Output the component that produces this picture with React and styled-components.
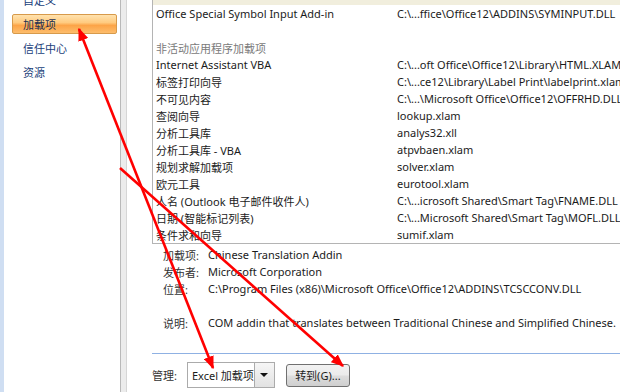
import React from "react";
import styled, { createGlobalStyle } from "styled-components";

const GlobalStyle = createGlobalStyle`
  html, body { margin: 0; padding: 0; background: #ffffff; }
  body { font-family: "Noto Sans", "Noto Sans CJK SC", sans-serif; font-size: 11px; }
`;

const Screen = styled.div`
  position: relative;
  width: 620px;
  height: 392px;
  overflow: hidden;
  display: flex;
  background: #ffffff;
  color: #1b1b1b;
`;

const Strip = styled.div`
  flex: 0 0 4px;
  background: #cfdef2;
`;

const Nav = styled.div`
  flex: 0 0 116px;
  margin-top: -12px;
  display: flex;
  flex-direction: column;
`;

const NavItem = styled.div`
  height: 20px;
  margin: 2px 3px 2px 8px;
  padding-left: 10px;
  display: flex;
  align-items: center;
  box-sizing: border-box;
  color: ${({ active }) => (active ? "#1c2f52" : "#20407a")};
  border: 1px solid ${({ active }) => (active ? "#d79a4b" : "transparent")};
  border-radius: 2px;
  background: ${({ active }) =>
    active
      ? "linear-gradient(#ffe2ae 0%, #ffcb80 42%, #fca447 58%, #fdbd6c 100%)"
      : "transparent"};
`;

const Divider = styled.div`
  flex: 0 0 5px;
  background: #ececec;
  border-left: 1px solid #b9b9b9;
  border-right: 1px solid #d6d6d6;
`;

const Content = styled.div`
  flex: 1 1 auto;
  min-width: 0;
  padding-left: 25px;
  display: flex;
  flex-direction: column;
`;

const ListBox = styled.div`
  width: 480px;
  flex-shrink: 0;
  border-left: 1px solid #b4b4b4;
  border-bottom: 1px solid #b4b4b4;
`;

const TopRow = styled.div`
  height: 5px;
  background: #f1eedd;
`;

const Row = styled.div`
  height: 17px;
  display: grid;
  grid-template-columns: 241px 1fr;
  align-items: center;
  padding-left: 3px;
  white-space: nowrap;
  overflow: hidden;
  color: ${({ muted }) => (muted ? "#7a7a7a" : "#1b1b1b")};
`;

const Cell = styled.span`
  overflow: hidden;
`;

const Details = styled.div`
  padding: 2px 0 0 11px;
  display: flex;
  flex-direction: column;
`;

const DetailRow = styled.div`
  height: 17px;
  display: grid;
  grid-template-columns: 45px 1fr;
  align-items: center;
  white-space: nowrap;
`;

const Label = styled.span`
  color: #333333;
  white-space: nowrap;
`;

const Rule = styled.div`
  margin-top: 22px;
  height: 1px;
  background: #8fb1e3;
`;

const Footer = styled.div`
  display: flex;
  align-items: center;
  margin-top: 8px;
  height: 26px;
  white-space: nowrap;
`;

const Combo = styled.div`
  flex: 0 0 86px;
  margin-left: 10px;
  height: 26px;
  box-sizing: border-box;
  border: 1px solid #ababab;
  display: flex;
  align-items: stretch;
  background: #fff;
`;

const ComboText = styled.span`
  flex: 1;
  padding-left: 4px;
  display: flex;
  align-items: center;
`;

const ComboArrow = styled.span`
  flex: 0 0 19px;
  border-left: 1px solid #ababab;
  display: flex;
  align-items: center;
  justify-content: center;
  background: linear-gradient(#f6f6f6, #e2e2e2);
  &::after {
    content: "";
    border-left: 4px solid transparent;
    border-right: 4px solid transparent;
    border-top: 4px solid #111;
  }
`;

const Button = styled.div`
  flex: 0 0 64px;
  margin-left: 11px;
  height: 23px;
  box-sizing: border-box;
  border: 1px solid #707070;
  border-radius: 3px;
  display: flex;
  align-items: center;
  justify-content: center;
  background: linear-gradient(#f2f2f2 0%, #ebebeb 48%, #dddddd 52%, #cfcfcf 100%);
`;

const Overlay = styled.svg`
  position: absolute;
  left: 0;
  top: 0;
  pointer-events: none;
`;

const addins = [
  ["Internet Assistant VBA", "C:\\...oft Office\\Office12\\Library\\HTML.XLAM"],
  ["标签打印向导", "C:\\...ce12\\Library\\Label Print\\labelprint.xlam"],
  ["不可见内容", "C:\\...\\Microsoft Office\\Office12\\OFFRHD.DLL"],
  ["查阅向导", "lookup.xlam"],
  ["分析工具库", "analys32.xll"],
  ["分析工具库 - VBA", "atpvbaen.xlam"],
  ["规划求解加载项", "solver.xlam"],
  ["欧元工具", "eurotool.xlam"],
  ["人名 (Outlook 电子邮件收件人)", "C:\\...icrosoft Shared\\Smart Tag\\FNAME.DLL"],
  ["日期 (智能标记列表)", "C:\\...Microsoft Shared\\Smart Tag\\MOFL.DLL"],
  ["条件求和向导", "sumif.xlam"],
];

const details = [
  ["加载项:", "Chinese Translation Addin"],
  ["发布者:", "Microsoft Corporation"],
  ["位置:", "C:\\Program Files (x86)\\Microsoft Office\\Office12\\ADDINS\\TCSCCONV.DLL"],
  ["", ""],
  ["说明:", "COM addin that translates between Traditional Chinese and Simplified Chinese."],
];

export default function App() {
  return (
    <Screen>
      <GlobalStyle />
      <Strip />
      <Nav>
        <NavItem>自定义</NavItem>
        <NavItem active>加载项</NavItem>
        <NavItem>信任中心</NavItem>
        <NavItem>资源</NavItem>
      </Nav>
      <Divider />
      <Content>
        <ListBox>
          <TopRow />
          <Row>
            <Cell>Office Special Symbol Input Add-in</Cell>
            <Cell>C:\...ffice\Office12\ADDINS\SYMINPUT.DLL</Cell>
          </Row>
          <Row />
          <Row muted>
            <Cell>非活动应用程序加载项</Cell>
          </Row>
          {addins.map(([name, path]) => (
            <Row key={name}>
              <Cell>{name}</Cell>
              <Cell>{path}</Cell>
            </Row>
          ))}
        </ListBox>
        <Details>
          {details.map(([label, value], i) => (
            <DetailRow key={i}>
              <Label>{label}</Label>
              <span>{value}</span>
            </DetailRow>
          ))}
        </Details>
        <Rule />
        <Footer>
          <Label>管理:</Label>
          <Combo>
            <ComboText>Excel 加载项</ComboText>
            <ComboArrow />
          </Combo>
          <Button>转到(G)...</Button>
        </Footer>
      </Content>
      <Overlay width="620" height="392" viewBox="0 0 620 392">
        <defs>
          <marker id="head" markerWidth="5" markerHeight="4" refX="4.5" refY="2" orient="auto-start-reverse" markerUnits="strokeWidth">
            <path d="M0,0 L5,2 L0,4 Z" fill="#ff0000" />
          </marker>
        </defs>
        <line x1="213" y1="368" x2="79" y2="29" stroke="#ff0000" strokeWidth="2.6" markerStart="url(#head)" markerEnd="url(#head)" />
        <line x1="120" y1="168" x2="343" y2="366" stroke="#ff0000" strokeWidth="2.6" markerEnd="url(#head)" />
      </Overlay>
    </Screen>
  );
}
